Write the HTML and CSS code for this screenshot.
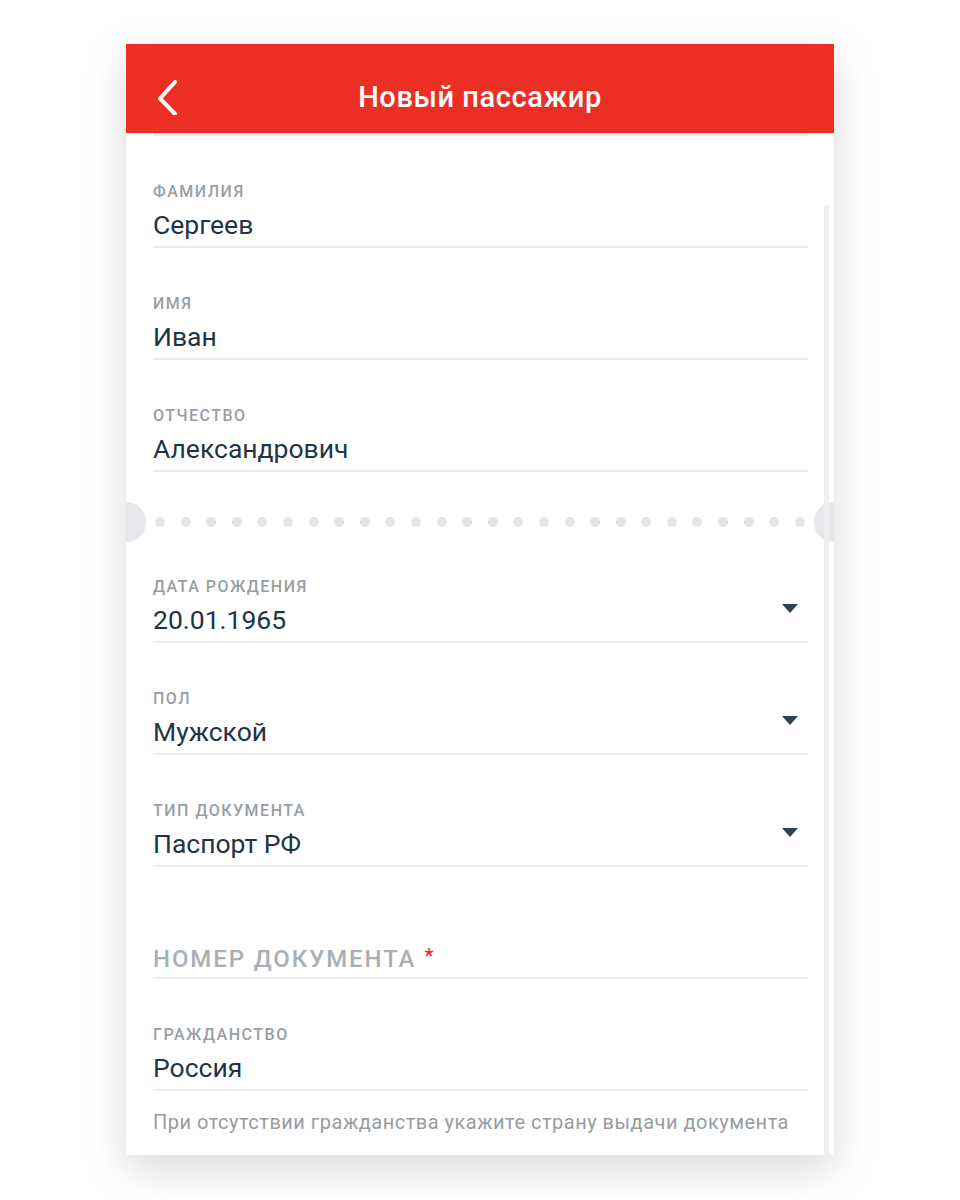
FILE: index.html
```html
<!DOCTYPE html>
<html lang="ru">
<head>
    <meta charset="UTF-8">
    <meta name="viewport" content="width=device-width, initial-scale=1.0">
    <title>Новый пассажир</title>
    <link rel="stylesheet" href="styles.css">
</head>
<body>

<div class="screen">
    <header class="top-bar">
        <button class="back-button" aria-label="Назад">
            <svg width="24" height="36" viewBox="0 0 24 36">
                <polyline points="19,3 4,19.5 19,35" fill="none" stroke="#fff" stroke-width="4" stroke-linecap="round" stroke-linejoin="round"/>
            </svg>
        </button>
        <h1 class="top-title">Новый пассажир</h1>
        <span></span>
    </header>

    <div class="content">
        <div class="scrolled-line"></div>

        <div class="form-group first">
            <div class="field">
                <div class="field-label">Фамилия</div>
                <div class="field-value">Сергеев</div>
            </div>
            <div class="field">
                <div class="field-label">Имя</div>
                <div class="field-value">Иван</div>
            </div>
            <div class="field">
                <div class="field-label">Отчество</div>
                <div class="field-value">Александрович</div>
            </div>
        </div>

        <div class="ticket-divider">
            <span class="notch notch-left"></span>
            <div class="dots" id="dots"></div>
            <span class="notch notch-right"></span>
        </div>

        <div class="form-group">
            <div class="field">
                <div class="field-label">Дата рождения</div>
                <div class="field-value select">20.01.1965<span class="caret"></span></div>
            </div>
            <div class="field">
                <div class="field-label">Пол</div>
                <div class="field-value select">Мужской<span class="caret"></span></div>
            </div>
            <div class="field">
                <div class="field-label">Тип документа</div>
                <div class="field-value select">Паспорт РФ<span class="caret"></span></div>
            </div>
            <div class="field">
                <div class="field-label"></div>
                <div class="field-value placeholder">Номер документа<span class="required">*</span></div>
            </div>
            <div class="field">
                <div class="field-label">Гражданство</div>
                <div class="field-value">Россия</div>
            </div>
        </div>

        <p class="hint">При отсутствии гражданства укажите страну выдачи документа</p>

        <div class="scrollbar"></div>
    </div>
</div>

<script>
    // Dotted line between the name block and the document block
    const dots = document.getElementById("dots");
    for (let i = 0; i < 26; i++) {
        const dot = document.createElement("span");
        dot.classList.add("dot");
        dots.appendChild(dot);
    }
</script>

</body>
</html>
```

FILE: styles.css
```css
body {
    margin: 0;
    padding-bottom: 45px;
    background-color: #fff;
    font-family: Roboto, "Liberation Sans", sans-serif;
}
.screen {
    width: 708px;
    margin: 44px auto 0;
    background-color: #fff;
    box-shadow: 0 14px 40px rgba(0, 0, 0, 0.15);
    overflow: hidden;
}
.top-bar {
    height: 89px;
    box-sizing: border-box;
    padding-top: 16px;
    background-color: #ec2f24;
    display: grid;
    grid-template-columns: 1fr auto 1fr;
    align-items: center;
}
.back-button {
    justify-self: start;
    margin-left: 30px;
    padding: 0;
    background: none;
    border: none;
    display: flex;
    cursor: pointer;
}
.top-title {
    margin: 0;
    color: #fff;
    font-size: 29px;
    font-weight: 500;
    letter-spacing: 0.6px;
}
.content {
    position: relative;
    padding-bottom: 22px;
}
.scrolled-line {
    height: 3px;
    margin: 0 26px 0 27px;
    background-color: #ececee;
}
.form-group {
    display: flex;
    flex-direction: column;
    gap: 46px;
    padding: 0 26px 0 27px;
}
.form-group.first {
    padding-top: 46px;
}
.field {
    border-bottom: 2px solid #ebebed;
    padding-bottom: 5px;
}
.field-label {
    height: 20px;
    line-height: 20px;
    font-size: 16px;
    font-weight: 500;
    letter-spacing: 1.5px;
    text-transform: uppercase;
    color: #989ea4;
}
.field-value {
    margin-top: 7px;
    height: 32px;
    line-height: 32px;
    font-size: 26.5px;
    color: #1f3445;
}
.field-value.select {
    display: flex;
    justify-content: space-between;
}
.caret {
    width: 0;
    height: 0;
    margin-right: 10px;
    border-left: 8px solid transparent;
    border-right: 8px solid transparent;
    border-top: 9px solid #2d3e4e;
}
.field-value.placeholder {
    font-size: 24px;
    font-weight: 500;
    letter-spacing: 1.9px;
    text-transform: uppercase;
    color: #a9afb5;
}
.required {
    color: #e8302a;
    font-size: 20px;
    margin-left: 8px;
    vertical-align: 4px;
}
.ticket-divider {
    height: 40px;
    margin: 30px 0 35px;
    display: flex;
    align-items: center;
}
.notch {
    width: 20px;
    height: 40px;
    background-color: #e6e7ea;
}
.notch-left {
    border-radius: 0 20px 20px 0;
}
.notch-right {
    border-radius: 20px 0 0 20px;
}
.dots {
    flex: 1;
    display: flex;
    justify-content: space-between;
    padding: 0 9px;
}
.dot {
    width: 10px;
    height: 10px;
    border-radius: 50%;
    background-color: #e3e4e8;
}
.hint {
    margin: 20px 26px 0 27px;
    line-height: 22px;
    font-size: 20px;
    color: #979ca1;
    letter-spacing: 0.5px;
}
.scrollbar {
    position: absolute;
    top: 72px;
    right: 5px;
    bottom: 0;
    width: 5px;
    background-color: #efefef;
}
```
